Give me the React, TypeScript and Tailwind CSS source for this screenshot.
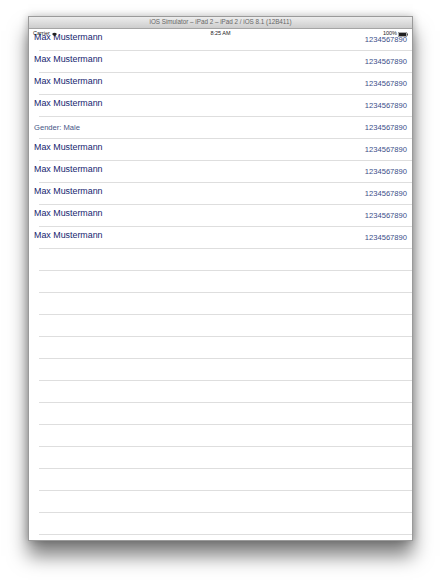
import React from "react";

const rows: { title: string; value: string; small?: boolean }[] = [
  { title: "Max Mustermann", value: "1234567890" },
  { title: "Max Mustermann", value: "1234567890" },
  { title: "Max Mustermann", value: "1234567890" },
  { title: "Max Mustermann", value: "1234567890" },
  { title: "Gender: Male", value: "1234567890", small: true },
  { title: "Max Mustermann", value: "1234567890" },
  { title: "Max Mustermann", value: "1234567890" },
  { title: "Max Mustermann", value: "1234567890" },
  { title: "Max Mustermann", value: "1234567890" },
  { title: "Max Mustermann", value: "1234567890" },
];

const empty = Array.from({ length: 13 });

export default function App() {
  return (
    <div
      className="w-[441px] h-[580px] bg-white pt-[16px] pl-[28px]"
      style={{ fontFamily: '"Liberation Sans", Arial, sans-serif' }}
    >
      <div className="w-[385px] h-[525px] flex flex-col border border-[#9a9a9a] shadow-[0_15px_18px_rgba(0,0,0,0.5),0_0_8px_rgba(0,0,0,0.25)]">
        <div className="h-[12px] shrink-0 bg-gradient-to-b from-[#ededed] to-[#cdcdcd] border-b border-[#a5a5a5] flex items-center justify-center text-[6.3px] text-[#666] leading-none">
          iOS Simulator – iPad 2 – iPad 2 / iOS 8.1 (12B411)
        </div>
        <div className="relative flex-1 bg-white overflow-hidden">
          <div className="flex flex-col">
            {rows.map((r, i) => (
              <div key={i} className="relative h-[22px] shrink-0 flex items-center justify-between pl-[5px] pr-[5px]">
                {r.small ? (
                  <span className="text-[7.6px] text-[#445586] leading-none">{r.title}</span>
                ) : (
                  <span className="text-[8.9px] text-[#15256f] leading-none mb-[5px]">{r.title}</span>
                )}
                <span className="text-[7.6px] text-[#3a4e88] leading-none">{r.value}</span>
                <div className="absolute left-[10px] right-0 bottom-0 h-px bg-[#dedede]" />
              </div>
            ))}
            {empty.map((_, i) => (
              <div key={"e" + i} className="relative h-[22px] shrink-0">
                <div className="absolute left-[10px] right-0 bottom-0 h-px bg-[#dedede]" />
              </div>
            ))}
          </div>
          <div className="absolute left-0 right-0 top-0 h-[10px] flex items-center justify-between px-[4px] text-[5.5px] text-[#222] leading-none">
            <div className="flex items-center gap-[1px]">
              <span>Carrier</span>
              <svg width="7" height="5" viewBox="0 0 14 10">
                <path d="M7 9 L2 4 A7 7 0 0 1 12 4 Z" fill="#222" />
              </svg>
            </div>
            <div className="absolute left-0 right-0 text-center">8:25 AM</div>
            <div className="flex items-center gap-[1px]">
              <span>100%</span>
              <svg width="10" height="5" viewBox="0 0 20 10">
                <rect x="0.5" y="0.5" width="17" height="9" rx="1.5" fill="none" stroke="#222" />
                <rect x="2" y="2" width="14" height="6" fill="#222" />
                <rect x="18" y="3" width="1.5" height="4" fill="#222" />
              </svg>
            </div>
          </div>
        </div>
      </div>
    </div>
  );
}
